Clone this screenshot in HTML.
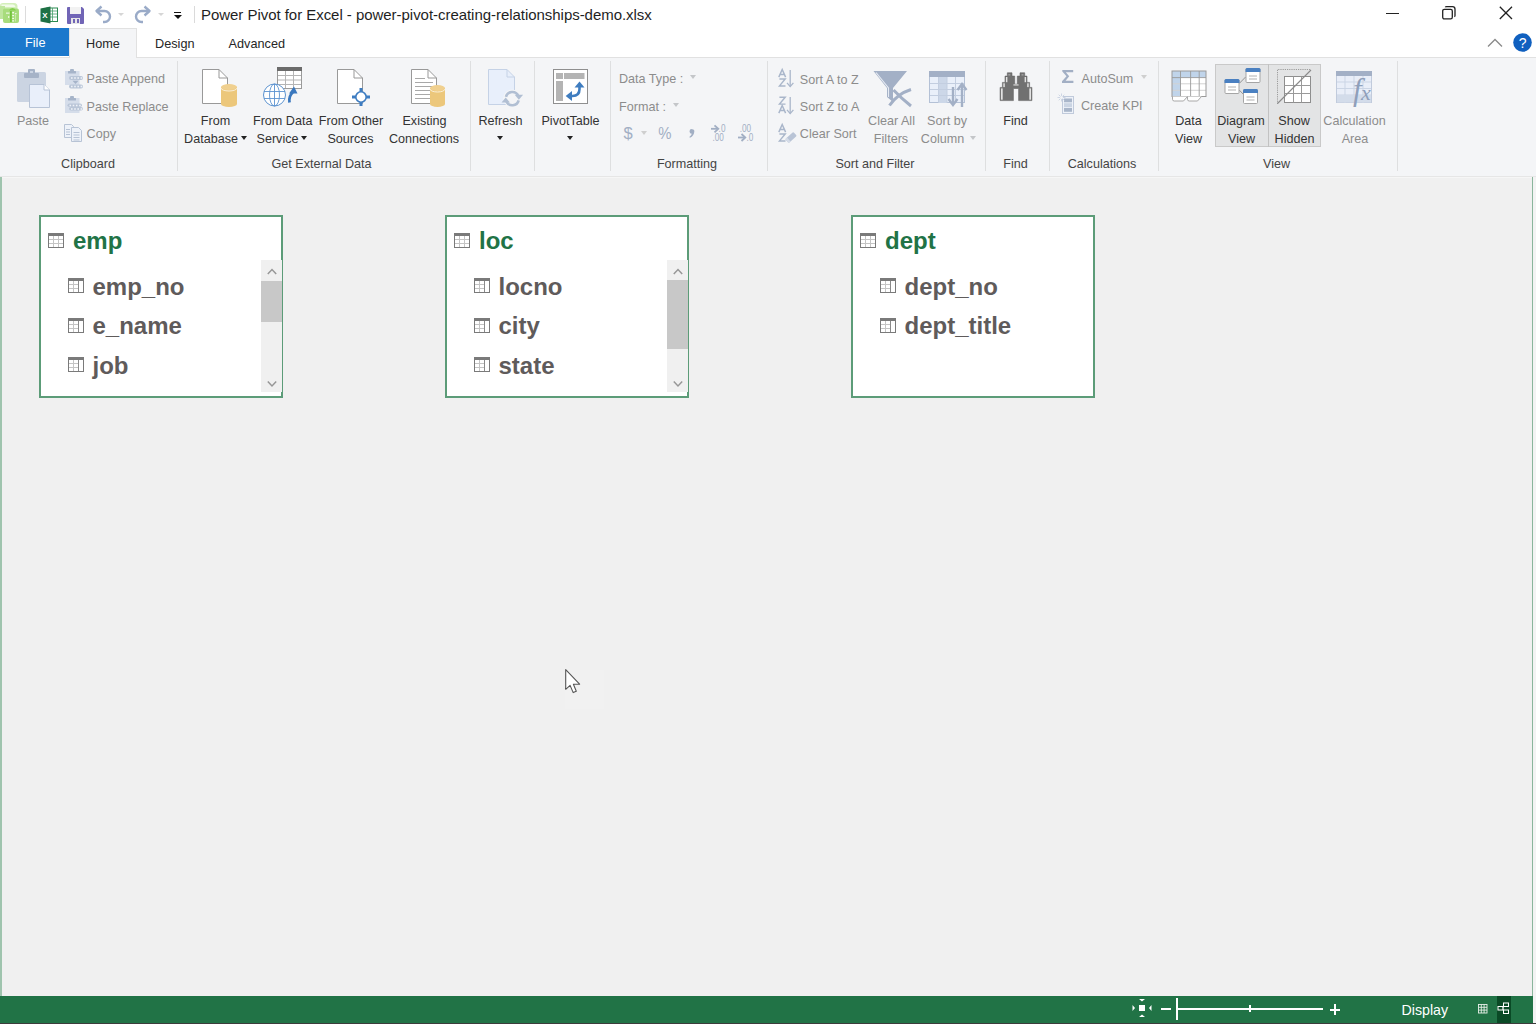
<!DOCTYPE html>
<html><head><meta charset="utf-8">
<style>
*{margin:0;padding:0;box-sizing:border-box}
html,body{width:1536px;height:1024px;overflow:hidden;background:#f3f3f3;font-family:"Liberation Sans",sans-serif;color:#262626}
.a{position:absolute}
.t{position:absolute;white-space:nowrap;line-height:1}
.r{font-size:12.6px;color:#333}
.rc{font-size:12.6px;color:#333;width:120px;text-align:center}
.dis{color:#8c8c8c}
.g{font-size:12.6px;color:#444;width:160px;text-align:center}
.sep{position:absolute;top:61px;width:1px;height:110px;background:#dedfe0}
.tri{position:absolute;width:0;height:0;border-left:3.5px solid transparent;border-right:3.5px solid transparent;border-top:4px solid #222}
.trig{position:absolute;width:0;height:0;border-left:3.5px solid transparent;border-right:3.5px solid transparent;border-top:4px solid #c4c6c9}
.tbl{position:absolute;top:216px;width:243px;height:181px;background:#fff;border:1.5px solid #5c9c78}
.hd{font-size:24px;font-weight:bold;color:#217346}
.col{font-size:24px;font-weight:bold;color:#5f5b5b}
svg{position:absolute;overflow:visible}
</style></head><body>

<!-- ===== TITLE BAR ===== -->
<div class="a" style="left:0;top:0;width:1536px;height:57px;background:#fff"></div>
<div id="qat"></div>
<svg style="left:0px;top:2px" width="20" height="22" viewBox="0 0 20 22">
<path d="M0 3.5 Q0 1 3 1 H14 Q17.5 1 17.5 4.5 V7 H0 Z" fill="#d3efb9"/>
<path d="M1.5 2.5 H13 Q15 2.5 15.5 5 H1.5 Z" fill="#f2fbe9"/>
<rect x="0" y="4" width="5" height="13" fill="#bfe69e"/>
<path d="M3 8 Q3 6.5 5 6.5 H17 Q19 6.5 19 8.5 V19 Q19 21 17 21 H5 Q3 21 3 19 Z" fill="#a8dc7c"/>
<path d="M12.5 6 Q15 6 16 8.5 H9 Q10 6 12.5 6 Z" fill="#84cf4c"/>
<rect x="10" y="9" width="1.8" height="11" fill="#74c43e"/>
<g fill="#f4fbee"><rect x="12.2" y="10" width="1.8" height="1.4"/><rect x="12.2" y="13" width="1.8" height="1.2"/><rect x="12.2" y="15.8" width="1.8" height="1.2"/><rect x="12.2" y="18.3" width="1.8" height="1.2"/>
<rect x="15.2" y="11" width="1.2" height="1.2"/><rect x="6" y="10.5" width="3.5" height="1.3" opacity="0.8"/><rect x="8" y="14" width="1.3" height="2" opacity="0.8"/></g>
<rect x="15" y="12.5" width="0.8" height="7" fill="#cdeeb3"/>
</svg>
<div class="a" style="left:25px;top:6px;width:1px;height:17px;background:#dcdcdc"></div>
<svg style="left:40px;top:6px" width="18" height="18" viewBox="0 0 18 18">
<rect x="7" y="2" width="10.5" height="13.5" fill="#fff" stroke="#2a8a50" stroke-width="1"/>
<path d="M9 5H17M9 8H17M9 11H17M12.5 2V15.5" stroke="#45a06a" stroke-width="0.8"/>
<path d="M0.5 2.5 L10.5 0.5 V17.5 L0.5 15.5 Z" fill="#1e7145"/>
<text x="2.3" y="12.3" font-family="Liberation Sans" font-weight="bold" font-size="8" fill="#fff">X</text>
</svg>
<svg style="left:67px;top:7px" width="17" height="17" viewBox="0 0 17 17">
<path d="M0 1 Q0 0 1 0 H15 L17 2 V16 Q17 17 16 17 H1 Q0 17 0 16 Z" fill="#7165b6"/>
<rect x="3" y="0" width="11" height="7" fill="#f2f2f2"/>
<rect x="4" y="11" width="9" height="6" fill="#e7e7e7"/><rect x="6" y="12" width="2" height="4" fill="#7165b6"/><rect x="10" y="12" width="2" height="4" fill="#7165b6"/>
</svg>
<svg style="left:94px;top:5px" width="18" height="19" viewBox="0 0 18 19">
<path d="M4 6 H10.5 A5.5 5.5 0 0 1 10.5 17 H9" fill="none" stroke="#9aabc8" stroke-width="2.4"/>
<path d="M7.5 1.5 L2.5 6 L7.5 10.5" fill="none" stroke="#9aabc8" stroke-width="2.4" stroke-linejoin="round"/>
</svg>
<div class="trig" style="left:118px;top:13px;border-top-color:#d6d6d6;border-left-width:3px;border-right-width:3px;border-top-width:3px"></div>
<svg style="left:134px;top:5px" width="18" height="19" viewBox="0 0 18 19">
<path d="M14 6 H7.5 A5.5 5.5 0 0 0 7.5 17 H9" fill="none" stroke="#9aabc8" stroke-width="2.4"/>
<path d="M10.5 1.5 L15.5 6 L10.5 10.5" fill="none" stroke="#9aabc8" stroke-width="2.4" stroke-linejoin="round"/>
</svg>
<div class="trig" style="left:158px;top:13px;border-top-color:#d6d6d6;border-left-width:3px;border-right-width:3px;border-top-width:3px"></div>
<div class="a" style="left:174px;top:12px;width:7px;height:1.3px;background:#111"></div>
<div class="tri" style="left:173.5px;top:14.5px;border-top-color:#111;border-left-width:4px;border-right-width:4px;border-top-width:4.5px"></div>
<!-- /qat -->
<div class="a" style="left:194px;top:6px;width:1px;height:17px;background:#dadada"></div>
<div class="t" style="left:201px;top:7.3px;font-size:15px;color:#1f1f1f;letter-spacing:-0.04px">Power Pivot for Excel - power-pivot-creating-relationships-demo.xlsx</div>
<div id="winbtns"></div>
<div class="a" style="left:1386px;top:12.5px;width:13px;height:1.3px;background:#222"></div>
<svg style="left:1442px;top:6px" width="14" height="14" viewBox="0 0 14 14">
<rect x="0.7" y="3.3" width="9.6" height="9.6" rx="1.6" fill="none" stroke="#222" stroke-width="1.3"/>
<path d="M3.3 1.3 Q3.6 0.7 4.5 0.7 H10.5 Q13 0.7 13 3 V9.5 Q13 10.3 12.4 10.7" fill="none" stroke="#222" stroke-width="1.3"/>
</svg>
<svg style="left:1499px;top:6px" width="14" height="14" viewBox="0 0 14 14">
<path d="M0.8 0.8 L13 13 M13 0.8 L0.8 13" stroke="#222" stroke-width="1.3"/>
</svg>
<svg style="left:1487px;top:38px" width="16" height="10" viewBox="0 0 16 10">
<path d="M1 8.5 L8 1.5 L15 8.5" fill="none" stroke="#8a8a8a" stroke-width="1.3"/>
</svg>
<svg style="left:1513px;top:33px" width="19" height="19" viewBox="0 0 19 19">
<circle cx="9.5" cy="9.5" r="9.3" fill="#1060bf"/>
<text x="9.6" y="15" text-anchor="middle" font-family="Liberation Sans" font-size="14" fill="#fff">?</text>
</svg>
<!-- /winbtns -->

<!-- ===== TABS ===== -->
<div class="a" style="left:0;top:28px;width:69px;height:28px;background:#1b78cc"></div>
<div class="t" style="left:25px;top:37.2px;font-size:12.7px;color:#fff">File</div>
<div class="a" style="left:69px;top:28px;width:68px;height:30px;background:#f4f5f7;border:1px solid #e1e1e1;border-bottom:none;z-index:2"></div>
<div class="t" style="left:86px;top:38.0px;font-size:12.7px;color:#262626;z-index:3">Home</div>
<div class="t" style="left:155px;top:38.0px;font-size:12.7px;color:#262626">Design</div>
<div class="t" style="left:228.6px;top:38.0px;font-size:12.7px;color:#262626">Advanced</div>

<!-- ===== RIBBON ===== -->
<div class="a" style="left:0;top:57px;width:1536px;height:120px;background:#f4f5f7;border-top:1px solid #e1e1e1;border-bottom:1px solid #e6e6e6"></div>
<div class="sep" style="left:177px"></div>
<div class="sep" style="left:470px"></div>
<div class="sep" style="left:534px"></div>
<div class="sep" style="left:610px"></div>
<div class="sep" style="left:767px"></div>
<div class="sep" style="left:985px"></div>
<div class="sep" style="left:1049px"></div>
<div class="sep" style="left:1158px"></div>
<div class="sep" style="left:1397px"></div>
<div id="ribbon-content"></div>
<svg style="left:17px;top:69px" width="33" height="39" viewBox="0 0 33 39">
<rect x="0" y="3" width="29" height="30" rx="1.5" fill="#cbd4e2"/>
<rect x="7" y="4" width="15" height="5" rx="1" fill="#a6b3c7"/>
<rect x="11" y="0" width="7" height="6" rx="1" fill="#a6b3c7"/><rect x="13" y="2" width="3" height="2" fill="#cbd4e2"/>
<path d="M12.5 15.5 H27 L32.5 21 V38.5 H12.5 Z" fill="#e9effa" stroke="#b7c3d6"/>
<path d="M27 15.5 V21 H32.5" fill="#fff" stroke="#b7c3d6"/>
</svg>
<div class="t r dis" style="left:-27.0px;top:114.83px;width:120px;text-align:center;">Paste</div>
<svg style="left:64px;top:69px" width="20" height="20" viewBox="0 0 20 20">
<rect x="1" y="2" width="14.5" height="14" fill="#d5ddea"/><rect x="4" y="2" width="8" height="2.5" rx="0.5" fill="#a6b4c9"/><rect x="6" y="0" width="4" height="2.5" rx="1" fill="#a6b4c9"/>
<rect x="5" y="7" width="14" height="4" rx="2" fill="#b9c5d7"/><rect x="7.0" y="8.2" width="1.6" height="1.6" fill="#eef2f8"/><rect x="10.2" y="8.2" width="1.6" height="1.6" fill="#eef2f8"/><rect x="13.4" y="8.2" width="1.6" height="1.6" fill="#eef2f8"/><rect x="16.6" y="8.2" width="1.6" height="1.6" fill="#eef2f8"/>
<path d="M8.5 11.7 H14.5 L11.5 15 Z" fill="#a6b4c9"/>
<rect x="5" y="15.5" width="14" height="4" rx="2" fill="#b9c5d7"/><rect x="7.0" y="16.7" width="1.6" height="1.6" fill="#eef2f8"/><rect x="10.2" y="16.7" width="1.6" height="1.6" fill="#eef2f8"/><rect x="13.4" y="16.7" width="1.6" height="1.6" fill="#eef2f8"/><rect x="16.6" y="16.7" width="1.6" height="1.6" fill="#eef2f8"/>
</svg>
<div class="t r dis" style="left:86.6px;top:72.83px;">Paste Append</div>
<svg style="left:64px;top:96px" width="20" height="18" viewBox="0 0 20 18">
<rect x="1" y="2" width="14.5" height="15" fill="#d5ddea"/><rect x="4" y="2" width="8" height="2.5" rx="0.5" fill="#a6b4c9"/><rect x="6" y="0" width="4" height="2.5" rx="1" fill="#a6b4c9"/>
<rect x="3.5" y="7.5" width="14.5" height="3.5" rx="2" fill="#b9c5d7"/><rect x="5.5" y="8.7" width="1.6" height="1.6" fill="#eef2f8"/><rect x="8.7" y="8.7" width="1.6" height="1.6" fill="#eef2f8"/><rect x="11.9" y="8.7" width="1.6" height="1.6" fill="#eef2f8"/><rect x="15.1" y="8.7" width="1.6" height="1.6" fill="#eef2f8"/>
<rect x="5" y="11" width="14" height="3.5" rx="2" fill="#b9c5d7"/><rect x="7.0" y="12.2" width="1.6" height="1.6" fill="#eef2f8"/><rect x="10.2" y="12.2" width="1.6" height="1.6" fill="#eef2f8"/><rect x="13.4" y="12.2" width="1.6" height="1.6" fill="#eef2f8"/><rect x="16.6" y="12.2" width="1.6" height="1.6" fill="#eef2f8"/>
</svg>
<div class="t r dis" style="left:86.6px;top:100.83px;">Paste Replace</div>
<svg style="left:64px;top:124px" width="18" height="18" viewBox="0 0 18 18">
<path d="M0.5 0.5 H7.5 L9.5 2.5 V13.5 H0.5 Z" fill="#eef2f9" stroke="#b7c3d5"/>
<path d="M7.5 3.5 H14.5 L17.5 6.5 V17.5 H7.5 Z" fill="#eef2f9" stroke="#b7c3d5"/>
<g stroke="#b7c3d5"><path d="M2 5.5H6M2 8H6M2 10.5H6M9.5 8.5H15.5M9.5 11H15.5M9.5 13.5H15.5M9.5 16H15.5"/></g>
</svg>
<div class="t r dis" style="left:86.6px;top:128.33px;">Copy</div>
<div class="t g" style="left:8.0px;top:157.83px;width:160px;text-align:center;">Clipboard</div>
<svg style="left:0;top:0" width="1" height="1"><path d="M202.5 69.5 H219 L227.5 78 V103.5 H202.5 Z" fill="#fff" stroke="#999"/><path d="M219 69.5 V78 H227.5" fill="none" stroke="#999"/><path d="M221 87 V104 A8.0 3 0 0 0 237 104 V87 Z" fill="#ecc77b"/><ellipse cx="229.0" cy="87" rx="8.0" ry="3" fill="#f0d08f"/><path d="M221 88 A8.0 3 0 0 0 237 88" fill="none" stroke="#fbf3e2" stroke-width="0.9"/></svg>
<div class="t r" style="left:155.5px;top:114.83px;width:120px;text-align:center;">From</div>
<div class="t r" style="left:151.0px;top:133.33px;width:120px;text-align:center;">Database</div>
<div class="tri" style="left:241px;top:135.5px"></div>
<svg style="left:262px;top:66px" width="42" height="42" viewBox="0 0 42 42">
<rect x="15.5" y="1.5" width="24" height="21" fill="#fff" stroke="#9a9a9a"/>
<rect x="15" y="1" width="25" height="4" fill="#6b6b6b"/>
<g stroke="#b5b5b5" fill="none"><path d="M16 9.5H39M16 14H39M16 18.5H39M23.5 5V22M31.5 5V22"/></g>
<circle cx="12.5" cy="29" r="11" fill="#fff" stroke="#5c93d0" stroke-width="1"/>
<ellipse cx="12.5" cy="29" rx="5" ry="11" fill="none" stroke="#5c93d0" stroke-width="0.9"/>
<path d="M2 25.5H23M2 32.5H23M12.5 18V40" stroke="#5c93d0" stroke-width="0.9" fill="none"/>
<path d="M27.5 36.5 Q26.5 30 31 26" fill="none" stroke="#3a78be" stroke-width="2.8"/>
<path d="M27 27.5 L32 20.5 L35.5 27.5 Z" fill="#3a78be"/>
</svg>
<div class="t r" style="left:222.7px;top:114.83px;width:120px;text-align:center;">From Data</div>
<div class="t r" style="left:217.5px;top:133.33px;width:120px;text-align:center;">Service</div>
<div class="tri" style="left:301px;top:135.5px"></div>
<svg style="left:0;top:0" width="1" height="1"><path d="M337.5 69.5 H354 L362.5 78 V103.5 H337.5 Z" fill="#fff" stroke="#999"/><path d="M354 69.5 V78 H362.5" fill="none" stroke="#999"/>
<g fill="#3d7cc1"><rect x="359.5" y="88" width="3" height="4"/><rect x="359.5" y="102" width="3" height="4"/><rect x="352" y="95.5" width="4" height="3"/><rect x="366" y="95.5" width="4" height="3"/></g>
<circle cx="361" cy="97" r="5.2" fill="#fff" stroke="#3d7cc1" stroke-width="1.6"/></svg>
<div class="t r" style="left:291.0px;top:114.83px;width:120px;text-align:center;">From Other</div>
<div class="t r" style="left:290.5px;top:133.33px;width:120px;text-align:center;">Sources</div>
<svg style="left:0;top:0" width="1" height="1"><path d="M411.5 69.5 H428 L436.5 78 V103.5 H411.5 Z" fill="#fff" stroke="#999"/><path d="M428 69.5 V78 H436.5" fill="none" stroke="#999"/>
<g stroke="#a8a8a8"><path d="M415 78.5H425M415 82.5H433M415 86.5H433M415 90.5H433M415 94.5H433M415 98.5H430"/></g><path d="M430 88 V104 A7.5 3 0 0 0 445 104 V88 Z" fill="#ecc77b"/><ellipse cx="437.5" cy="88" rx="7.5" ry="3" fill="#f0d08f"/><path d="M430 89 A7.5 3 0 0 0 445 89" fill="none" stroke="#fbf3e2" stroke-width="0.9"/></svg>
<div class="t r" style="left:364.5px;top:114.83px;width:120px;text-align:center;">Existing</div>
<div class="t r" style="left:364.0px;top:133.33px;width:120px;text-align:center;">Connections</div>
<div class="t g" style="left:221.5px;top:157.83px;width:200px;text-align:center;">Get External Data</div>
<svg style="left:488px;top:69px" width="40" height="40" viewBox="0 0 40 40">
<path d="M0.5 0.5 H19 L26.5 8 V35.5 H0.5 Z" fill="#e8effb" stroke="#c5d2e6"/><path d="M19 0.5 V8 H26.5" fill="none" stroke="#c5d2e6"/>
<circle cx="24.3" cy="29.4" r="9" fill="#f4f5f7"/>
<path d="M17.92 27.89 A6.6 6.6 0 0 1 30.28 26.81" fill="none" stroke="#b1bfd3" stroke-width="2.6"/>
<path d="M26.70 25.80 H35.10 L30.90 30.80 Z" fill="#b1bfd3"/>
<path d="M30.68 31.31 A6.6 6.6 0 0 1 18.32 32.39" fill="none" stroke="#b1bfd3" stroke-width="2.6"/>
<path d="M13.50 33.40 H21.90 L17.70 28.40 Z" fill="#b1bfd3"/>
</svg>
<div class="t r" style="left:440.5px;top:114.83px;width:120px;text-align:center;">Refresh</div>
<div class="tri" style="left:496.5px;top:135.5px"></div>
<svg style="left:553px;top:69px" width="36" height="36" viewBox="0 0 36 36">
<rect x="0.5" y="0.5" width="34" height="34" fill="#fff" stroke="#8f8f8f"/>
<rect x="3" y="4" width="7" height="6" fill="#b4b4b4"/><rect x="11" y="4" width="20.5" height="6" fill="#b4b4b4"/><rect x="3" y="12" width="7" height="20" fill="#b4b4b4"/>
<path d="M18 27 H19.5 Q26.5 27 26.5 20 V17" fill="none" stroke="#3f7dc0" stroke-width="2.6"/>
<path d="M21.5 18.5 L26.5 12.5 L31.5 18.5 Z" fill="#3f7dc0"/><path d="M19 22 L12.7 27 L19 32 Z" fill="#3f7dc0"/>
</svg>
<div class="t r" style="left:510.5px;top:114.83px;width:120px;text-align:center;">PivotTable</div>
<div class="tri" style="left:567px;top:135.5px"></div>
<div class="t r dis" style="left:619px;top:73.23px;">Data Type :</div>
<div class="trig" style="left:689.5px;top:75px"></div>
<div class="t r dis" style="left:619px;top:100.93px;">Format :</div>
<div class="trig" style="left:672.5px;top:103px"></div>
<svg style="left:618px;top:118px" width="144" height="28" viewBox="0 0 144 28">
<text x="5.5" y="20.5" font-family="Liberation Sans" font-size="16.5" fill="#a2afc4">$</text>
<text x="40.3" y="20.6" font-family="Liberation Sans" font-size="16" fill="#a2afc4" transform="translate(40.3 0) scale(0.93 1) translate(-40.3 0)">%</text>
<path d="M71.5 13.5 A2.4 2.4 0 1 1 76.2 14.2 Q76 17.5 72 19.8 L71.3 19 Q73.6 17.2 73.8 15.8 A2.4 2.4 0 0 1 71.5 13.5 Z" fill="#a2afc4"/>
<g font-family="Liberation Sans" font-size="10.5" fill="#a2afc4">
<text transform="translate(103 14) scale(0.78 1)">0</text>
<text transform="translate(94.5 23) scale(0.78 1)">.00</text>
<text transform="translate(100.5 14) scale(0.78 1)">.</text>
<text transform="translate(121.8 14) scale(0.78 1)">.00</text>
<text transform="translate(128.5 23) scale(0.78 1)">.0</text>
</g>
<path d="M93 10.8 H99" stroke="#a2afc4" stroke-width="1.8"/><path d="M96.5 7.3 L100.3 10.8 L96.5 14.3" fill="none" stroke="#a2afc4" stroke-width="1.8"/>
<path d="M120 19.5 H126" stroke="#a2afc4" stroke-width="1.8"/><path d="M123.5 16 L127.3 19.5 L123.5 23" fill="none" stroke="#a2afc4" stroke-width="1.8"/>
</svg>
<div class="trig" style="left:640.5px;top:130.5px;border-top-color:#cfcfcf"></div>
<div class="t g" style="left:607.0px;top:157.83px;width:160px;text-align:center;">Formatting</div>
<svg style="left:778px;top:68.5px" width="18" height="19" viewBox="0 0 18 19"><path d="M0.8 8.1 L4.2 0.5 L7.6 8.1 M2.3 5.5 H6.1" fill="none" stroke="#a9b6ca" stroke-width="1.45"/><path d="M1.4 10.0 H7.2 L1.5 16.9 H7.5" fill="none" stroke="#a9b6ca" stroke-width="1.45"/><path d="M12.2 1 V17.5" stroke="#a9b6ca" stroke-width="1.3"/><path d="M9 13.8 L12.2 17.6 L15.4 13.8" fill="none" stroke="#a9b6ca" stroke-width="1.3"/></svg>
<div class="t r dis" style="left:799.8px;top:73.63px;">Sort A to Z</div>
<svg style="left:778px;top:96px" width="18" height="19" viewBox="0 0 18 19"><path d="M1.4 1.2 H7.2 L1.5 8.1 H7.5" fill="none" stroke="#a9b6ca" stroke-width="1.45"/><path d="M0.8 17.1 L4.2 9.5 L7.6 17.1 M2.3 14.5 H6.1" fill="none" stroke="#a9b6ca" stroke-width="1.45"/><path d="M12.2 1 V17.5" stroke="#a9b6ca" stroke-width="1.3"/><path d="M9 13.8 L12.2 17.6 L15.4 13.8" fill="none" stroke="#a9b6ca" stroke-width="1.3"/></svg>
<div class="t r dis" style="left:799.8px;top:101.13px;">Sort Z to A</div>
<svg style="left:778px;top:123.5px" width="19" height="19" viewBox="0 0 19 19"><path d="M0.8 8.1 L4.2 0.5 L7.6 8.1 M2.3 5.5 H6.1" fill="none" stroke="#a9b6ca" stroke-width="1.45"/><path d="M1.4 10.0 H7.2 L1.5 16.9 H7.5" fill="none" stroke="#a9b6ca" stroke-width="1.45"/>
<rect x="-5.5" y="-2.6" width="11" height="5.2" rx="1" transform="translate(13 13.5) rotate(-42)" fill="#b9c4d6"/>
<rect x="-5.5" y="-2.6" width="2.5" height="5.2" transform="translate(13 13.5) rotate(-42)" fill="#d5dce8"/></svg>
<div class="t r dis" style="left:799.8px;top:128.33px;">Clear Sort</div>
<svg style="left:873px;top:70px" width="36" height="37" viewBox="0 0 36 37">
<path d="M0.5 1 H34 L20 18 V32 L14 27 V18 Z" fill="#a3b0c6"/>
<path d="M3 2.5 L15.5 18 V27" fill="none" stroke="#e6ebf3" stroke-width="1.1"/>
<path d="M20.5 20 Q28 28 38 36" fill="none" stroke="#a3b0c6" stroke-width="3"/><path d="M16.5 35.5 Q24 24 38 19.5" fill="none" stroke="#a3b0c6" stroke-width="3"/>
</svg>
<div class="t r dis" style="left:831.5px;top:114.83px;width:120px;text-align:center;">Clear All</div>
<div class="t r dis" style="left:831.0px;top:133.33px;width:120px;text-align:center;">Filters</div>
<svg style="left:929px;top:71px" width="40" height="37" viewBox="0 0 40 37">
<rect x="0.5" y="0.5" width="35" height="31" fill="#eaf0fa" stroke="#b4c1d6"/>
<rect x="0" y="0" width="36" height="6" fill="#a3b0c6"/>
<rect x="9.5" y="6" width="8.5" height="26" fill="#ccd7e8"/>
<g stroke="#c3cee0"><path d="M1 12.5H35M1 18.5H35M1 24.5H35M9.5 6V32M18 6V32M26.5 6V32"/></g>
<path d="M24 16V33" stroke="#a3b0c6" stroke-width="2.4"/><path d="M19.5 28 L24 34 L28.5 28" fill="none" stroke="#a3b0c6" stroke-width="2.4"/>
<path d="M33 36V14" stroke="#a3b0c6" stroke-width="2.4"/><path d="M28.5 19 L33 13 L37.5 19" fill="none" stroke="#a3b0c6" stroke-width="2.4"/>
</svg>
<div class="t r dis" style="left:887.0px;top:114.83px;width:120px;text-align:center;">Sort by</div>
<div class="t r dis" style="left:882.5px;top:133.33px;width:120px;text-align:center;">Column</div>
<div class="trig" style="left:969.5px;top:136px"></div>
<div class="t g" style="left:775.0px;top:157.83px;width:200px;text-align:center;">Sort and Filter</div>
<svg style="left:990px;top:64px" width="50" height="46" viewBox="0 0 50 46">
<g fill="#717171" stroke="#666" stroke-width="0.6">
<path d="M17.3 8.8 H22 V12.1 H24.7 V20.2 H27.3 V12.1 H30 V8.8 H34.7 V12.1 H37 V18.4 H39.6 V23.4 H41.9 V36.6 H28.6 V24.5 H23.4 V36.6 H10.1 V23.4 H12.4 V18.4 H15 V12.1 H17.3 Z"/>
</g>
<g fill="#e2e2e2">
<rect x="11" y="24.4" width="1.7" height="11.3"/><rect x="13.3" y="19.3" width="1.5" height="3.8"/><rect x="15.9" y="13" width="1.5" height="5.2"/>
<rect x="39.3" y="24.4" width="1.7" height="11.3"/><rect x="37.2" y="19.3" width="1.5" height="3.8"/><rect x="34.6" y="13" width="1.5" height="5.2"/>
<rect x="23.4" y="20.4" width="5.2" height="1.1"/>
</g>
<g fill="#9a9a9a"><rect x="18.3" y="10" width="2" height="1.6"/><rect x="31.5" y="10" width="2" height="1.6"/></g>
</svg>
<div class="t r" style="left:955.5px;top:114.83px;width:120px;text-align:center;">Find</div>
<div class="t g" style="left:955.5px;top:157.83px;width:120px;text-align:center;">Find</div>
<svg style="left:1062px;top:70px" width="12" height="13" viewBox="0 0 12 13">
<path d="M0.3 0 H11.2 V2.2 H3.8 L7.2 6.3 L3.6 10.8 H11.4 V12.9 H0 V11.3 L4.5 6.3 L0.3 1.5 Z" fill="#a2afc4"/></svg>
<div class="t r dis" style="left:1081.5px;top:72.63px;">AutoSum</div>
<div class="trig" style="left:1140.5px;top:75px;border-top-color:#cfcfcf"></div>
<svg style="left:1057px;top:93px" width="18" height="22" viewBox="0 0 18 22">
<rect x="5.5" y="3.5" width="11" height="17" fill="#eef2f9" stroke="#c0cadb"/>
<rect x="7" y="5.5" width="8" height="3.8" fill="#a9b6ca"/><rect x="7" y="10.2" width="8" height="4" fill="#cad4e3"/><rect x="7" y="15" width="8" height="3.8" fill="#a9b6ca"/>
<g stroke="#c9d3e2" stroke-width="0.9"><path d="M4.5 0.5V8.5M0.5 4.5H8.5M1.7 1.7L7.3 7.3M7.3 1.7L1.7 7.3"/></g>
<circle cx="4.5" cy="4.5" r="1.5" fill="#f4f5f7"/>
</svg>
<div class="t r dis" style="left:1081px;top:100.13px;">Create KPI</div>
<div class="t g" style="left:1042.0px;top:157.83px;width:120px;text-align:center;">Calculations</div>
<div class="a" style="left:1215px;top:64px;width:106px;height:83px;background:#e3e4e5;border:1px solid #c9c9c9"></div>
<div class="a" style="left:1268px;top:64px;width:1px;height:83px;background:#c2c2c2"></div>
<svg style="left:1171px;top:70px" width="36" height="33" viewBox="0 0 36 33">
<rect x="1" y="1" width="34" height="25.5" fill="#fff"/>
<rect x="1" y="1" width="34" height="6.6" fill="#c0d4ea"/><rect x="1" y="1" width="8.5" height="25.5" fill="#c0d4ea"/>
<g stroke="#d2d2d2" stroke-width="1"><path d="M1 13.8H35M1 20.3H35"/></g>
<g stroke="#9a9a9a" stroke-width="0.9"><path d="M1 7.6H35M9.5 1V26.5M19.6 1V26.5M28.2 1V26.5"/></g>
<rect x="1" y="1" width="34" height="25.5" fill="none" stroke="#9a9a9a" stroke-width="1"/>
<path d="M1.5 26.5 V29.3 Q1.5 31 3.2 31 H12.5 L16.5 26.5" fill="#fff" stroke="#a8a8a8"/>
<path d="M16.5 26.5 V29.3 Q16.5 31 18.2 31 H26.5 L30.5 26.5" fill="#fff" stroke="#a8a8a8"/>
</svg>
<div class="t r" style="left:1128.5px;top:114.83px;width:120px;text-align:center;">Data</div>
<div class="t r" style="left:1128.5px;top:133.33px;width:120px;text-align:center;">View</div>
<svg style="left:1223px;top:67px" width="38" height="38" viewBox="0 0 38 38">
<path d="M16.2 16.5 L22.6 10 M16.2 23 L20.1 27" stroke="#8a8a8a" stroke-width="0.9"/>
<rect x="23" y="1.5" width="14" height="14" rx="1" fill="#fff" stroke="#a5a5a5"/><path d="M22.5 5.0 V2.5 Q22.5 1.0 24 1.0 H36 Q37.5 1.0 37.5 2.5 V5.0 Z" fill="#4a80c1"/><path d="M26 9.0H34M26 12.0H34" stroke="#a8a8a8" stroke-width="0.9"/><rect x="2" y="12.5" width="14" height="14" rx="1" fill="#fff" stroke="#a5a5a5"/><path d="M1.5 16.0 V13.5 Q1.5 12.0 3 12.0 H15 Q16.5 12.0 16.5 13.5 V16.0 Z" fill="#4a80c1"/><path d="M5 20.0H13M5 23.0H13" stroke="#a8a8a8" stroke-width="0.9"/><rect x="20.5" y="22.5" width="14" height="14" rx="1" fill="#fff" stroke="#a5a5a5"/><path d="M20.0 26.0 V23.5 Q20.0 22.0 21.5 22.0 H33.5 Q35.0 22.0 35.0 23.5 V26.0 Z" fill="#4a80c1"/><path d="M23.5 30.0H31.5M23.5 33.0H31.5" stroke="#a8a8a8" stroke-width="0.9"/>
</svg>
<div class="t r" style="left:1181.0px;top:114.83px;width:120px;text-align:center;">Diagram</div>
<div class="t r" style="left:1181.5px;top:133.33px;width:120px;text-align:center;">View</div>
<svg style="left:1276px;top:68px" width="37" height="37" viewBox="0 0 37 37">
<path d="M1.5 36 V1.5 H35" fill="none" stroke="#9c9c9c" stroke-dasharray="1.2 1"/>
<rect x="8.5" y="8.5" width="26" height="26" fill="#fff" stroke="#8e8e8e"/>
<path d="M8.5 17.5H34.5M8.5 25.5H34.5M17.5 8.5V34.5M25.5 8.5V34.5" stroke="#9a9a9a"/>
<path d="M1.5 35.5 L35 2" stroke="#8a8a8a" stroke-width="1.1"/>
</svg>
<div class="t r" style="left:1234.0px;top:114.83px;width:120px;text-align:center;">Show</div>
<div class="t r" style="left:1234.5px;top:133.33px;width:120px;text-align:center;">Hidden</div>
<svg style="left:1336px;top:71px" width="40" height="37" viewBox="0 0 40 37">
<rect x="0.5" y="0.5" width="35" height="31" fill="#e9eef8" stroke="#c1cbdc"/>
<rect x="0" y="0" width="36" height="5" fill="#a3b0c6"/>
<g stroke="#cbd5e5"><path d="M1 11H35M1 17.5H35M1 24H35M9 5V32M18 5V32M27 5V32"/></g>
<rect x="1" y="24" width="34" height="7.5" fill="#d3dcea"/>
<text x="17" y="29" font-family="Liberation Serif" font-style="italic" font-size="31" fill="#8f9fba">f</text>
<text x="25" y="29" font-family="Liberation Serif" font-style="italic" font-size="22" fill="#8f9fba">x</text>
</svg>
<div class="t r dis" style="left:1294.5px;top:114.83px;width:120px;text-align:center;">Calculation</div>
<div class="t r dis" style="left:1295.0px;top:133.33px;width:120px;text-align:center;">Area</div>
<div class="t g" style="left:1216.5px;top:157.83px;width:120px;text-align:center;">View</div>
<!-- /ribbon -->

<!-- ===== CANVAS ===== -->
<div class="a" style="left:0;top:177px;width:1533px;height:819px;background:#f0f0f0;border-top:1px solid #f6f6f6"></div>
<div class="a" style="left:0;top:177px;width:2px;height:819px;background:#9fc4ae"></div>
<div class="a" style="left:1532px;top:177px;width:1px;height:819px;background:#8ab59c"></div>
<div id="tables"></div>
<div class="a" style="left:39px;top:215px;width:244px;height:183px;background:#fff;border:2px solid #5c9c78"></div>
<svg style="left:48px;top:233px" width="16" height="15" viewBox="0 0 16 15" shape-rendering="crispEdges">
<rect x="0" y="0" width="16" height="15" fill="#7a7a7a"/>
<rect x="1" y="3" width="14" height="11" fill="#fff"/>
<g fill="#c4c4c4"><rect x="1" y="6" width="14" height="1"/><rect x="1" y="10" width="14" height="1"/><rect x="5" y="3" width="1" height="11"/><rect x="10" y="3" width="1" height="11"/></g>
</svg>
<div class="t hd" style="left:73px;top:228.7px">emp</div>
<svg style="left:68px;top:278px" width="16" height="15" viewBox="0 0 16 15" shape-rendering="crispEdges">
<rect x="0" y="0" width="16" height="15" fill="#7a7a7a"/>
<rect x="1" y="3" width="14" height="11" fill="#fff"/>
<g fill="#c4c4c4"><rect x="1" y="6" width="10" height="1"/><rect x="1" y="10" width="10" height="1"/><rect x="5" y="3" width="1" height="11"/></g>
<rect x="10" y="3" width="1" height="11" fill="#8a8a8a"/>
</svg>
<div class="t col" style="left:92.5px;top:274.9px">emp_no</div>
<svg style="left:68px;top:317.7px" width="16" height="15" viewBox="0 0 16 15" shape-rendering="crispEdges">
<rect x="0" y="0" width="16" height="15" fill="#7a7a7a"/>
<rect x="1" y="3" width="14" height="11" fill="#fff"/>
<g fill="#c4c4c4"><rect x="1" y="6" width="10" height="1"/><rect x="1" y="10" width="10" height="1"/><rect x="5" y="3" width="1" height="11"/></g>
<rect x="10" y="3" width="1" height="11" fill="#8a8a8a"/>
</svg>
<div class="t col" style="left:92.5px;top:314.3px">e_name</div>
<svg style="left:68px;top:357px" width="16" height="15" viewBox="0 0 16 15" shape-rendering="crispEdges">
<rect x="0" y="0" width="16" height="15" fill="#7a7a7a"/>
<rect x="1" y="3" width="14" height="11" fill="#fff"/>
<g fill="#c4c4c4"><rect x="1" y="6" width="10" height="1"/><rect x="1" y="10" width="10" height="1"/><rect x="5" y="3" width="1" height="11"/></g>
<rect x="10" y="3" width="1" height="11" fill="#8a8a8a"/>
</svg>
<div class="t col" style="left:92.5px;top:353.6px">job</div>
<div class="a" style="left:261px;top:260px;width:21px;height:132px;background:#f0f0f0"></div>
<div class="a" style="left:261px;top:281px;width:21px;height:41px;background:#c8c8c8"></div>
<svg style="left:266.5px;top:267.5px" width="10" height="8" viewBox="0 0 10 8"><path d="M0.8 6 L5 1.6 L9.2 6" fill="none" stroke="#979797" stroke-width="1.5"/></svg>
<svg style="left:266.5px;top:379.5px" width="10" height="8" viewBox="0 0 10 8"><path d="M0.8 1.6 L5 6 L9.2 1.6" fill="none" stroke="#979797" stroke-width="1.5"/></svg>
<div class="a" style="left:445px;top:215px;width:244px;height:183px;background:#fff;border:2px solid #5c9c78"></div>
<svg style="left:454px;top:233px" width="16" height="15" viewBox="0 0 16 15" shape-rendering="crispEdges">
<rect x="0" y="0" width="16" height="15" fill="#7a7a7a"/>
<rect x="1" y="3" width="14" height="11" fill="#fff"/>
<g fill="#c4c4c4"><rect x="1" y="6" width="14" height="1"/><rect x="1" y="10" width="14" height="1"/><rect x="5" y="3" width="1" height="11"/><rect x="10" y="3" width="1" height="11"/></g>
</svg>
<div class="t hd" style="left:479px;top:228.7px">loc</div>
<svg style="left:474px;top:278px" width="16" height="15" viewBox="0 0 16 15" shape-rendering="crispEdges">
<rect x="0" y="0" width="16" height="15" fill="#7a7a7a"/>
<rect x="1" y="3" width="14" height="11" fill="#fff"/>
<g fill="#c4c4c4"><rect x="1" y="6" width="10" height="1"/><rect x="1" y="10" width="10" height="1"/><rect x="5" y="3" width="1" height="11"/></g>
<rect x="10" y="3" width="1" height="11" fill="#8a8a8a"/>
</svg>
<div class="t col" style="left:498.5px;top:274.9px">locno</div>
<svg style="left:474px;top:317.7px" width="16" height="15" viewBox="0 0 16 15" shape-rendering="crispEdges">
<rect x="0" y="0" width="16" height="15" fill="#7a7a7a"/>
<rect x="1" y="3" width="14" height="11" fill="#fff"/>
<g fill="#c4c4c4"><rect x="1" y="6" width="10" height="1"/><rect x="1" y="10" width="10" height="1"/><rect x="5" y="3" width="1" height="11"/></g>
<rect x="10" y="3" width="1" height="11" fill="#8a8a8a"/>
</svg>
<div class="t col" style="left:498.5px;top:314.3px">city</div>
<svg style="left:474px;top:357px" width="16" height="15" viewBox="0 0 16 15" shape-rendering="crispEdges">
<rect x="0" y="0" width="16" height="15" fill="#7a7a7a"/>
<rect x="1" y="3" width="14" height="11" fill="#fff"/>
<g fill="#c4c4c4"><rect x="1" y="6" width="10" height="1"/><rect x="1" y="10" width="10" height="1"/><rect x="5" y="3" width="1" height="11"/></g>
<rect x="10" y="3" width="1" height="11" fill="#8a8a8a"/>
</svg>
<div class="t col" style="left:498.5px;top:353.6px">state</div>
<div class="a" style="left:667px;top:260px;width:21px;height:132px;background:#f0f0f0"></div>
<div class="a" style="left:667px;top:280px;width:21px;height:69px;background:#c8c8c8"></div>
<svg style="left:672.5px;top:267.5px" width="10" height="8" viewBox="0 0 10 8"><path d="M0.8 6 L5 1.6 L9.2 6" fill="none" stroke="#979797" stroke-width="1.5"/></svg>
<svg style="left:672.5px;top:379.5px" width="10" height="8" viewBox="0 0 10 8"><path d="M0.8 1.6 L5 6 L9.2 1.6" fill="none" stroke="#979797" stroke-width="1.5"/></svg>
<div class="a" style="left:851px;top:215px;width:244px;height:183px;background:#fff;border:2px solid #5c9c78"></div>
<svg style="left:860px;top:233px" width="16" height="15" viewBox="0 0 16 15" shape-rendering="crispEdges">
<rect x="0" y="0" width="16" height="15" fill="#7a7a7a"/>
<rect x="1" y="3" width="14" height="11" fill="#fff"/>
<g fill="#c4c4c4"><rect x="1" y="6" width="14" height="1"/><rect x="1" y="10" width="14" height="1"/><rect x="5" y="3" width="1" height="11"/><rect x="10" y="3" width="1" height="11"/></g>
</svg>
<div class="t hd" style="left:885px;top:228.7px">dept</div>
<svg style="left:880px;top:278px" width="16" height="15" viewBox="0 0 16 15" shape-rendering="crispEdges">
<rect x="0" y="0" width="16" height="15" fill="#7a7a7a"/>
<rect x="1" y="3" width="14" height="11" fill="#fff"/>
<g fill="#c4c4c4"><rect x="1" y="6" width="10" height="1"/><rect x="1" y="10" width="10" height="1"/><rect x="5" y="3" width="1" height="11"/></g>
<rect x="10" y="3" width="1" height="11" fill="#8a8a8a"/>
</svg>
<div class="t col" style="left:904.5px;top:274.9px">dept_no</div>
<svg style="left:880px;top:317.7px" width="16" height="15" viewBox="0 0 16 15" shape-rendering="crispEdges">
<rect x="0" y="0" width="16" height="15" fill="#7a7a7a"/>
<rect x="1" y="3" width="14" height="11" fill="#fff"/>
<g fill="#c4c4c4"><rect x="1" y="6" width="10" height="1"/><rect x="1" y="10" width="10" height="1"/><rect x="5" y="3" width="1" height="11"/></g>
<rect x="10" y="3" width="1" height="11" fill="#8a8a8a"/>
</svg>
<div class="t col" style="left:904.5px;top:314.3px">dept_title</div>
<div class="a" style="left:565px;top:670px;width:39px;height:39px;background:#f1f1f1"></div>
<svg style="left:565px;top:669px" width="18" height="26" viewBox="0 0 18 26"><path d="M0.7 0.7 L0.7 20.3 L5.1 16.4 L8.2 23.6 L11.3 22.2 L8.4 15.2 L14.6 15.2 Z" fill="#fff" stroke="#555" stroke-width="1.1" stroke-linejoin="round"/></svg>
<!-- /tables -->

<!-- ===== STATUS BAR ===== -->
<div class="a" style="left:0;top:996px;width:1533px;height:27px;background:#217346"></div>
<div class="a" style="left:0;top:1023px;width:1536px;height:1px;background:#3c3c3c"></div>
<div id="statusc"></div>
<svg style="left:1131px;top:998px" width="22" height="20" viewBox="0 0 22 20">
<rect x="8" y="7" width="6" height="6" fill="#fff"/>
<path d="M8 1 H14 L11 3.5 Z M8 19 H14 L11 16.5 Z M1.5 7 V13 L4 10 Z M20.5 7 V13 L18 10 Z" fill="#fff"/>
</svg>
<div class="a" style="left:1161px;top:1008px;width:10px;height:2px;background:#fff"></div>
<div class="a" style="left:1176px;top:998px;width:2px;height:22px;background:#fff"></div>
<div class="a" style="left:1178px;top:1008px;width:145px;height:1.5px;background:#fff"></div>
<div class="a" style="left:1249px;top:1005px;width:1.5px;height:7px;background:#fff"></div>
<div class="a" style="left:1330px;top:1009px;width:10px;height:2px;background:#fff"></div>
<div class="a" style="left:1334px;top:1004px;width:2px;height:11px;background:#fff"></div>
<div class="t" style="left:1401.5px;top:1002.5px;font-size:14.2px;color:#fff">Display</div>
<svg style="left:1478px;top:1004px" width="10" height="10" viewBox="0 0 10 10">
<rect x="0.5" y="0.5" width="8.5" height="8.5" fill="none" stroke="#e8efe9" stroke-width="0.9"/>
<path d="M0.5 3.3H9M0.5 6.1H9M3.3 0.5V9M6.1 0.5V9" stroke="#e8efe9" stroke-width="0.9"/>
</svg>
<div class="a" style="left:1497px;top:996px;width:14px;height:27px;background:#0a4a26"></div>
<svg style="left:1497px;top:1002px" width="13" height="13" viewBox="0 0 13 13">
<rect x="6.5" y="1" width="5" height="3.5" fill="none" stroke="#fff" stroke-width="1"/>
<rect x="1" y="4.5" width="5" height="3.5" fill="none" stroke="#fff" stroke-width="1"/>
<rect x="6.5" y="8" width="5" height="3.5" fill="none" stroke="#fff" stroke-width="1"/>
<path d="M6 6 L6.5 3 M6 6.5 L6.5 9.5" stroke="#fff" stroke-width="0.8"/>
</svg>
<!-- /status -->

</body></html>
